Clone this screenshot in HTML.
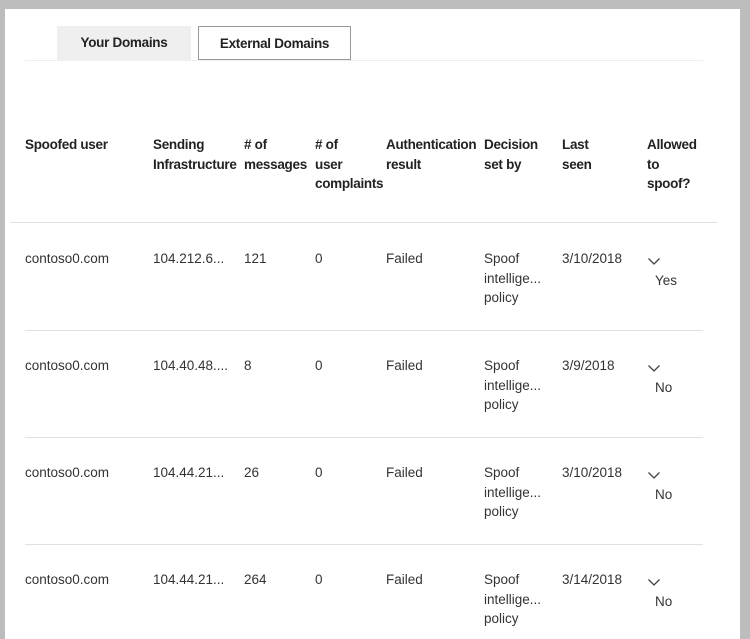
<!DOCTYPE html>
<html><head><style>
body{margin:0;width:750px;height:630px;background:#bdbdbd;position:relative;overflow:hidden;font-family:"Liberation Sans",sans-serif;font-size:13.5px;color:#333}
#w{position:absolute;left:5px;top:9px;width:735px;height:630px;background:#fff}
.a{position:absolute;line-height:19.5px;white-space:nowrap}
.h{font-weight:bold;color:#222;letter-spacing:-0.3px}
.l{position:absolute;height:1px;background:#e1e1e1}
.t{position:absolute;font-weight:bold;font-size:13.5px;text-align:center;line-height:33px;color:#222;letter-spacing:-0.3px}
svg{position:absolute}
</style></head><body>
<div id="w"></div>
<div class="t" style="left:57px;top:26px;width:134px;height:34px;background:#efefef">Your Domains</div>
<div class="t" style="left:198px;top:26px;width:151px;height:32px;border:1px solid #999;background:#fff">External Domains</div>
<div class="l" style="left:25px;top:60px;width:678px;background:#eee"></div>

<div class="a h" style="left:25px;top:135px">Spoofed user</div>
<div class="a h" style="left:153px;top:135px">Sending<br>Infrastructure</div>
<div class="a h" style="left:244px;top:135px"># of<br>messages</div>
<div class="a h" style="left:315px;top:135px"># of<br>user<br>complaints</div>
<div class="a h" style="left:386px;top:135px">Authentication<br>result</div>
<div class="a h" style="left:484px;top:135px">Decision<br>set by</div>
<div class="a h" style="left:562px;top:135px">Last<br>seen</div>
<div class="a h" style="left:647px;top:135px">Allowed<br>to<br>spoof?</div>
<div class="l" style="left:10px;top:222px;width:707px"></div>

<div id="rows"></div>
<script>
var d=[["104.212.6...","121","3/10/2018","Yes"],["104.40.48....","8","3/9/2018","No"],["104.44.21...","26","3/10/2018","No"],["104.44.21...","264","3/14/2018","No"]];
var h="";
d.forEach(function(r,i){var y=249+i*107;
h+='<div class="a" style="left:25px;top:'+y+'px">contoso0.com</div>'+
'<div class="a" style="left:153px;top:'+y+'px">'+r[0]+'</div>'+
'<div class="a" style="left:244px;top:'+y+'px">'+r[1]+'</div>'+
'<div class="a" style="left:315px;top:'+y+'px">0</div>'+
'<div class="a" style="left:386px;top:'+y+'px">Failed</div>'+
'<div class="a" style="left:484px;top:'+y+'px">Spoof<br>intellige...<br>policy</div>'+
'<div class="a" style="left:562px;top:'+y+'px">'+r[2]+'</div>'+
'<svg style="left:647px;top:'+(y+8)+'px" width="14" height="9"><path d="M1.5 1.5L7 7L12.5 1.5" fill="none" stroke="#444" stroke-width="1.3"/></svg>'+
'<div class="a" style="left:655px;top:'+(y+22)+'px">'+r[3]+'</div>';
if(i<3)h+='<div class="l" style="left:25px;top:'+(330+i*107)+'px;width:678px"></div>';
});
document.getElementById("rows").innerHTML=h;
</script>
</body></html>
